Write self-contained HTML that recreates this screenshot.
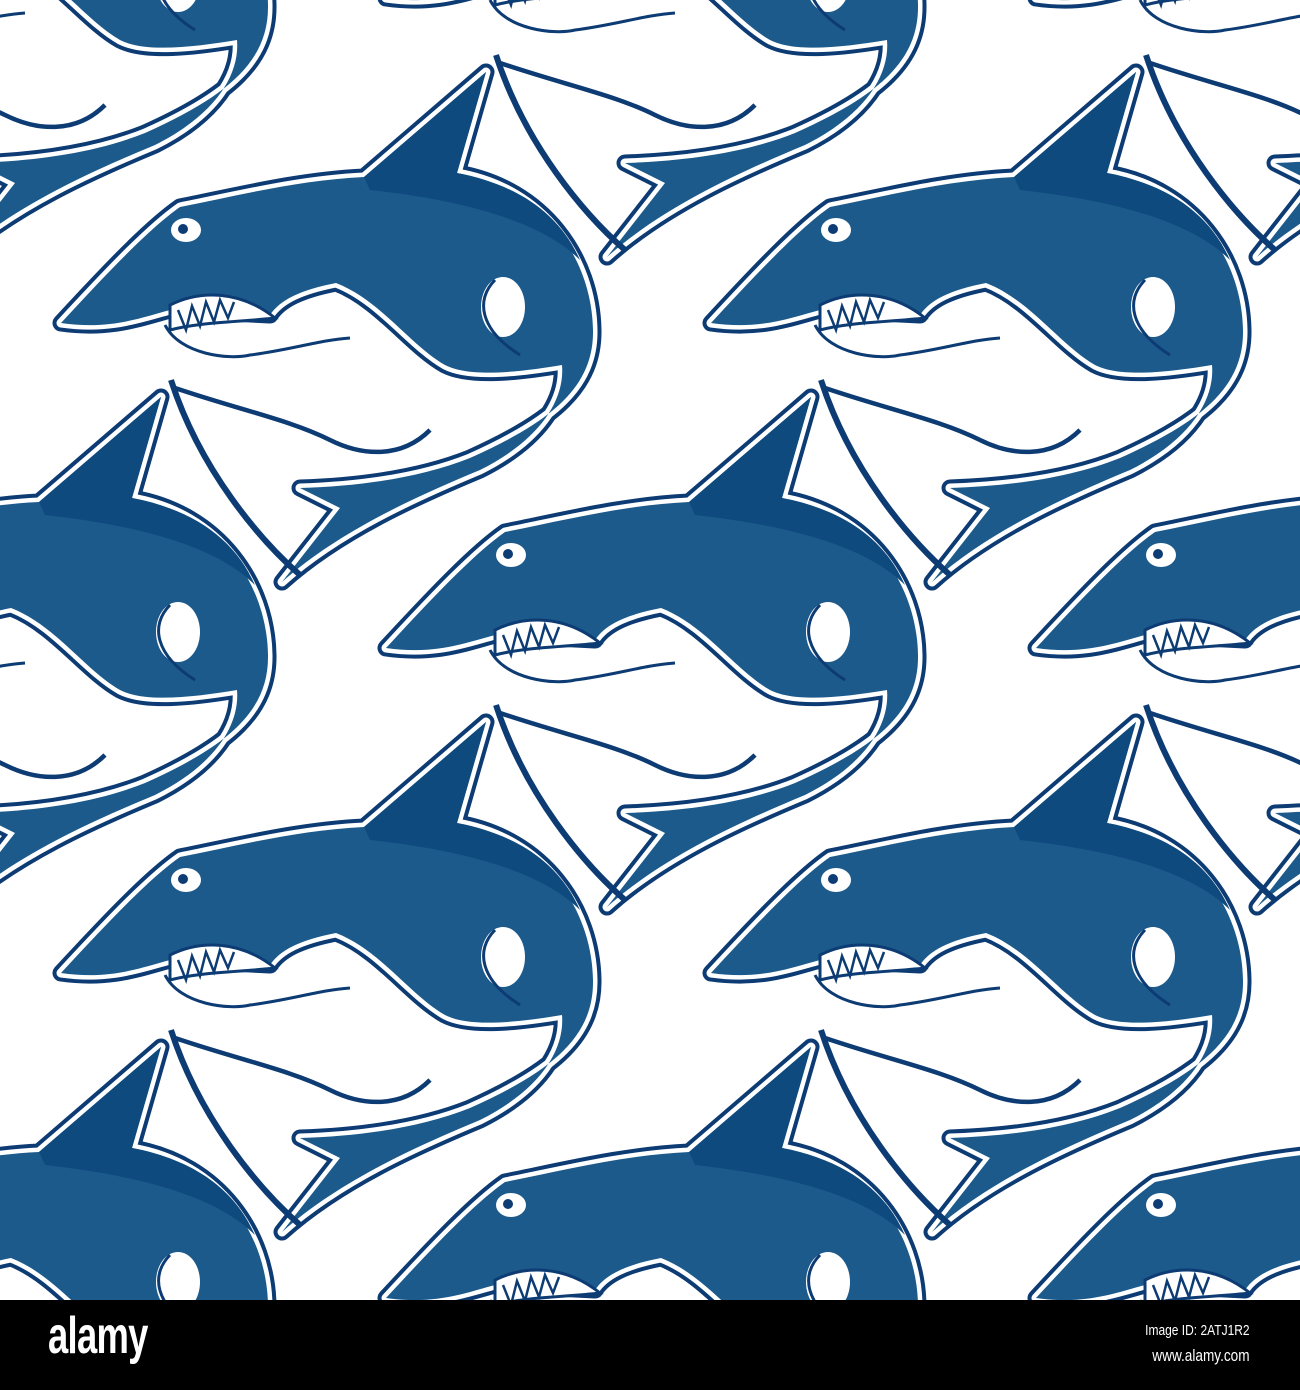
<!DOCTYPE html>
<html><head><meta charset="utf-8"><style>
html,body{margin:0;padding:0;background:#fff;overflow:hidden;width:1300px;height:1390px}
#w{position:relative;width:1300px;height:1390px;overflow:hidden;background:#fff}
#f{position:absolute;left:0;top:1300px;width:1300px;height:90px;background:#000;color:#fff;font-family:"Liberation Sans",sans-serif;overflow:hidden}
</style></head><body><div id="w">
<svg width="1300" height="1300" viewBox="0 0 1300 1300" style="position:absolute;left:0;top:0;overflow:hidden">
<defs>
<path id="b" d="M61,323 C110,270 150,228 180,207 C240,195 300,180 364,177 L486,72 L457,173 C545,188 592,260 593,330 C594,385 555,420 470,458 C420,478 360,486 300,488 L340,508 L282,582 C340,530 420,495 480,470 C540,440 565,400 562,365 C520,372 470,378 445,365 C410,345 380,300 336,283 C300,290 280,300 270,315 L170,310 C140,318 110,330 61,323 Z"/>
<g id="s">
<use href="#b" fill="none" stroke="#0d3b73" stroke-width="17" stroke-linejoin="round"/>
<use href="#b" fill="none" stroke="#fff" stroke-width="9" stroke-linejoin="round"/>
<use href="#b" fill="#1c5a8c"/>
<path d="M364,177 L486,72 L457,173 C520,185 560,215 580,260 C540,220 460,200 370,190 Z" fill="#0f4a7e"/>
<path d="M170,305 C200,290 240,290 275,318 C240,322 200,322 170,330 Z" fill="#fff" stroke="#0d3b73" stroke-width="3"/>
<path d="M178,310 L186,330 L192,306 L200,326 L206,302 L214,322 L220,300 L228,318 L234,302" fill="none" stroke="#0d3b73" stroke-width="2.5"/>
<path d="M165,325 C180,355 230,360 250,355 C290,350 320,340 350,338" fill="none" stroke="#0d3b73" stroke-width="3"/>
<path d="M171,380 C200,470 260,540 300,575" fill="none" stroke="#0d3b73" stroke-width="6"/>
<path d="M175,388 C240,410 290,420 330,440 C360,455 400,460 430,430" fill="none" stroke="#0d3b73" stroke-width="4.5"/>
<ellipse cx="503" cy="307" rx="22" ry="30" fill="#fff"/>
<path d="M495,280 C475,300 480,330 520,355" fill="none" stroke="#0d3b73" stroke-width="3"/>
<ellipse cx="186" cy="230" rx="15" ry="12" fill="#fff"/>
<circle cx="183" cy="229" r="5" fill="#0d3b73"/>
</g>
</defs>
<use href="#s" x="0" y="-650"/><use href="#s" x="650" y="-650"/>
<use href="#s" x="-325" y="-325"/><use href="#s" x="325" y="-325"/><use href="#s" x="975" y="-325"/>
<use href="#s" x="0" y="0"/><use href="#s" x="650" y="0"/>
<use href="#s" x="-325" y="325"/><use href="#s" x="325" y="325"/><use href="#s" x="975" y="325"/>
<use href="#s" x="0" y="650"/><use href="#s" x="650" y="650"/>
<use href="#s" x="-325" y="975"/><use href="#s" x="325" y="975"/><use href="#s" x="975" y="975"/>
</svg>
<div id="f">
<div style="position:absolute;left:48px;top:6px;font-size:52px;font-weight:bold;transform:scaleX(0.7);transform-origin:left;letter-spacing:-1px">alamy</div>
<div style="position:absolute;right:50px;top:22px;font-size:15px;transform:scaleX(0.8);transform-origin:right">Image ID: 2ATJ1R2</div>
<div style="position:absolute;right:50px;top:46px;font-size:17px;transform:scaleX(0.8);transform-origin:right">www.alamy.com</div>
</div>
</div></body></html>
